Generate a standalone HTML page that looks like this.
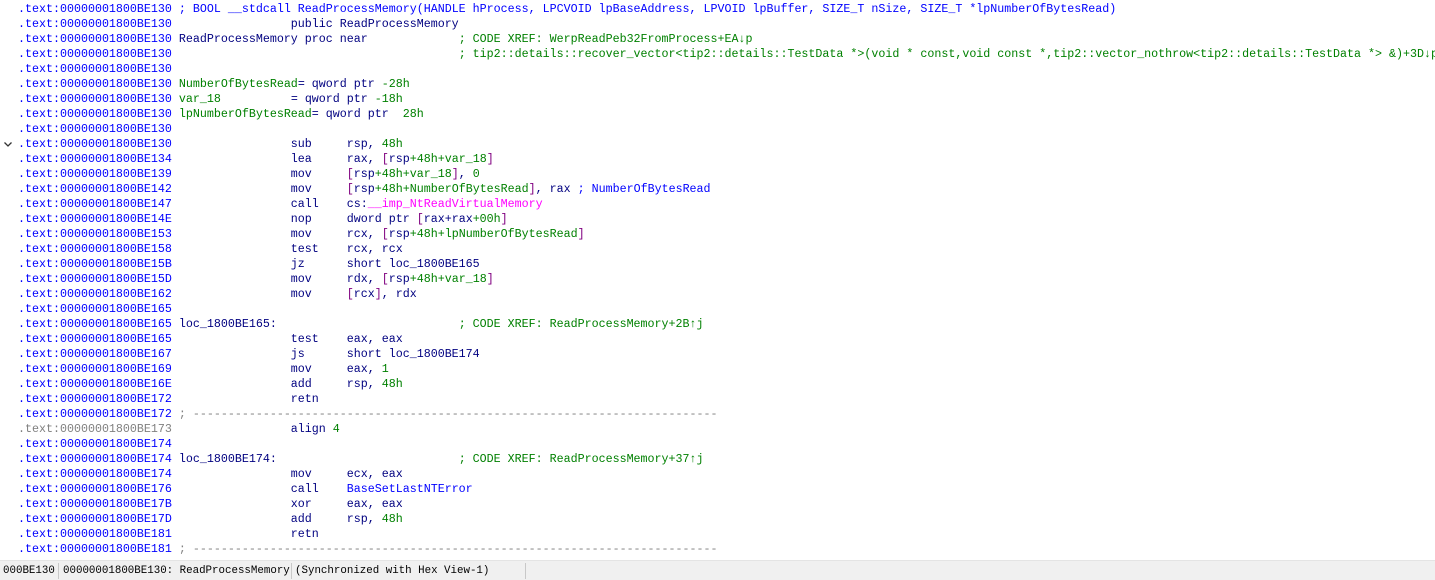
<!DOCTYPE html>
<html><head><meta charset="utf-8"><style>
html,body{margin:0;padding:0;background:#fff;width:1435px;height:580px;overflow:hidden}
#v{position:absolute;left:18px;top:2px;width:1417px;height:557px;overflow:hidden}
pre{margin:0;font-family:"Liberation Mono","DejaVu Sans Mono",monospace;font-size:11.67px;line-height:15px;white-space:pre;color:#000080}
.a{color:#0000ff}.x{color:#808080}.g{color:#008000}.p{color:#800080}.b{color:#0000ff}.k{color:#ff00ff}.n{color:#000080}
#chev{position:absolute;left:3px;top:139px;width:10px;height:10px}
#sb{position:absolute;left:0;top:560px;width:1435px;height:20px;background:#f0f0f0;border-top:1px solid #e4e4e4;box-sizing:border-box}
#sb pre{position:absolute;top:3px;font-size:10.8px;line-height:14px;color:#000}
.sep{position:absolute;top:2px;width:1px;height:16px;background:#c8c8c8}
</style></head><body>
<svg id="chev" viewBox="0 0 10 10"><path d="M1.5 3.5 L5 7 L8.5 3.5" fill="none" stroke="#333" stroke-width="1.3"/></svg>
<div id="v"><pre><span class="a">.text:00000001800BE130</span> <span class="b">; BOOL __stdcall ReadProcessMemory(HANDLE hProcess, LPCVOID lpBaseAddress, LPVOID lpBuffer, SIZE_T nSize, SIZE_T *lpNumberOfBytesRead)</span>
<span class="a">.text:00000001800BE130</span>                 public ReadProcessMemory
<span class="a">.text:00000001800BE130</span> ReadProcessMemory proc near             <span class="g">; CODE XREF: WerpReadPeb32FromProcess+EA↓p</span>
<span class="a">.text:00000001800BE130</span>                                         <span class="g">; tip2::details::recover_vector&lt;tip2::details::TestData *&gt;(void * const,void const *,tip2::vector_nothrow&lt;tip2::details::TestData *&gt; &amp;)+3D↓p</span>
<span class="a">.text:00000001800BE130</span>
<span class="a">.text:00000001800BE130</span> <span class="g">NumberOfBytesRead</span>= qword ptr <span class="g">-28h</span>
<span class="a">.text:00000001800BE130</span> <span class="g">var_18</span>          = qword ptr <span class="g">-18h</span>
<span class="a">.text:00000001800BE130</span> <span class="g">lpNumberOfBytesRead</span>= qword ptr  <span class="g">28h</span>
<span class="a">.text:00000001800BE130</span>
<span class="a">.text:00000001800BE130</span>                 sub     rsp, <span class="g">48h</span>
<span class="a">.text:00000001800BE134</span>                 lea     rax, <span class="p">[</span>rsp<span class="g">+48h+var_18</span><span class="p">]</span>
<span class="a">.text:00000001800BE139</span>                 mov     <span class="p">[</span>rsp<span class="g">+48h+var_18</span><span class="p">]</span>, <span class="g">0</span>
<span class="a">.text:00000001800BE142</span>                 mov     <span class="p">[</span>rsp<span class="g">+48h+NumberOfBytesRead</span><span class="p">]</span>, rax <span class="b">; NumberOfBytesRead</span>
<span class="a">.text:00000001800BE147</span>                 call    cs:<span class="k">__imp_NtReadVirtualMemory</span>
<span class="a">.text:00000001800BE14E</span>                 nop     dword ptr <span class="p">[</span>rax+rax<span class="g">+00h</span><span class="p">]</span>
<span class="a">.text:00000001800BE153</span>                 mov     rcx, <span class="p">[</span>rsp<span class="g">+48h+lpNumberOfBytesRead</span><span class="p">]</span>
<span class="a">.text:00000001800BE158</span>                 test    rcx, rcx
<span class="a">.text:00000001800BE15B</span>                 jz      short loc_1800BE165
<span class="a">.text:00000001800BE15D</span>                 mov     rdx, <span class="p">[</span>rsp<span class="g">+48h+var_18</span><span class="p">]</span>
<span class="a">.text:00000001800BE162</span>                 mov     <span class="p">[</span>rcx<span class="p">]</span>, rdx
<span class="a">.text:00000001800BE165</span>
<span class="a">.text:00000001800BE165</span> loc_1800BE165:                          <span class="g">; CODE XREF: ReadProcessMemory+2B↑j</span>
<span class="a">.text:00000001800BE165</span>                 test    eax, eax
<span class="a">.text:00000001800BE167</span>                 js      short loc_1800BE174
<span class="a">.text:00000001800BE169</span>                 mov     eax, <span class="g">1</span>
<span class="a">.text:00000001800BE16E</span>                 add     rsp, <span class="g">48h</span>
<span class="a">.text:00000001800BE172</span>                 retn
<span class="a">.text:00000001800BE172</span> <span class="x">; ---------------------------------------------------------------------------</span>
<span class="x">.text:00000001800BE173</span>                 align <span class="g">4</span>
<span class="a">.text:00000001800BE174</span>
<span class="a">.text:00000001800BE174</span> loc_1800BE174:                          <span class="g">; CODE XREF: ReadProcessMemory+37↑j</span>
<span class="a">.text:00000001800BE174</span>                 mov     ecx, eax
<span class="a">.text:00000001800BE176</span>                 call    <span class="b">BaseSetLastNTError</span>
<span class="a">.text:00000001800BE17B</span>                 xor     eax, eax
<span class="a">.text:00000001800BE17D</span>                 add     rsp, <span class="g">48h</span>
<span class="a">.text:00000001800BE181</span>                 retn
<span class="a">.text:00000001800BE181</span> <span class="x">; ---------------------------------------------------------------------------</span></pre></div>
<div id="sb">
<pre style="left:3px">000BE130</pre><div class="sep" style="left:58px"></div>
<pre style="left:63px">00000001800BE130: ReadProcessMemory</pre><div class="sep" style="left:291px"></div>
<pre style="left:295px">(Synchronized with Hex View-1)</pre><div class="sep" style="left:525px"></div>
</div>
</body></html>
